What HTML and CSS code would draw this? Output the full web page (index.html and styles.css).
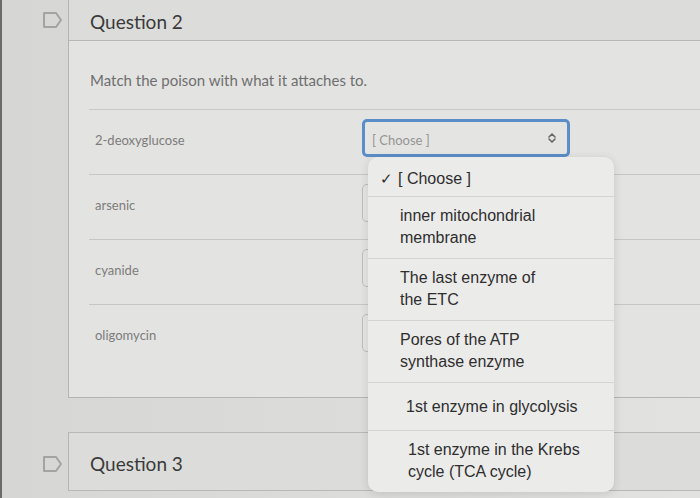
FILE: index.html
```html
<!DOCTYPE html>
<html>
<head>
<meta charset="utf-8">
<link rel="stylesheet" href="styles.css">
</head>
<body>
<div class="page">
  <section class="question">
    <div class="gutter">
      <svg class="flag" width="22" height="18" viewBox="0 0 22 18"><path d="M2 2 H14 L19 9 L14 16 H2 Z" fill="none" stroke="#a3a3a1" stroke-width="2" stroke-linejoin="round"/></svg>
    </div>
    <div class="panel">
      <div class="qhead">Question 2</div>
      <div class="qbody">
        <p class="prompt">Match the poison with what it attaches to.</p>
        <div class="answers">
          <div class="row">
            <span class="label">2-deoxyglucose</span>
            <div class="select active">
              <span>[ Choose ]</span>
              <svg width="10" height="12" viewBox="0 0 10 12"><path d="M2 5 L5 2 L8 5 M2 7 L5 10 L8 7" fill="none" stroke="#666" stroke-width="1.6" stroke-linecap="round" stroke-linejoin="round"/></svg>
            </div>
          </div>
          <div class="row">
            <span class="label">arsenic</span>
            <div class="select"></div>
          </div>
          <div class="row">
            <span class="label">cyanide</span>
            <div class="select"></div>
          </div>
          <div class="row last">
            <span class="label">oligomycin</span>
            <div class="select"></div>
          </div>
        </div>
      </div>
    </div>
  </section>

  <section class="question q3">
    <div class="gutter">
      <svg class="flag" width="22" height="18" viewBox="0 0 22 18"><path d="M2 2 H14 L19 9 L14 16 H2 Z" fill="none" stroke="#a3a3a1" stroke-width="2" stroke-linejoin="round"/></svg>
    </div>
    <div class="panel">
      <div class="qhead tall">Question 3</div>
    </div>
  </section>

  <ul class="menu">
    <li class="opt first"><span class="check">✓</span>[ Choose ]</li>
    <li class="opt">inner mitochondrial<br>membrane</li>
    <li class="opt">The last enzyme of<br>the ETC</li>
    <li class="opt">Pores of the ATP<br>synthase enzyme</li>
    <li class="opt single">1st enzyme in glycolysis</li>
    <li class="opt">1st enzyme in the Krebs<br>cycle (TCA cycle)</li>
  </ul>
</div>
</body>
</html>
```

FILE: styles.css
```css
html, body {
  margin: 0;
  padding: 0;
}
body {
  background: #dadad8;
  font-family: Lato, "Open Sans", sans-serif;
  width: 700px;
  height: 498px;
  overflow: hidden;
}
.page {
  position: relative;
  width: 700px;
  height: 498px;
  border-left: 2px solid #6b6b6b;
  box-sizing: border-box;
  background: linear-gradient(90deg, #d6d6d4 0%, #dddddb 60%, #e2e2e0 100%);
}
.question {
  display: flex;
}
.gutter {
  width: 66px;
  flex: none;
  display: flex;
  justify-content: flex-end;
  padding-right: 4px;
  box-sizing: border-box;
}
.flag {
  margin-top: 11px;
}
.panel {
  flex: 1;
  border-left: 1px solid #b4b4b2;
  background: #e3e3e1;
}
.qhead {
  height: 41px;
  box-sizing: border-box;
  border-bottom: 1px solid #b8b8b6;
  background: #dcdcda;
  padding-left: 21px;
  font-size: 19px;
  line-height: 44px;
  color: #3a3a3a;
}
.qbody {
  padding: 30px 0 28px 20px;
  border-bottom: 1px solid #b4b4b2;
}
.prompt {
  margin: 0 0 20px 1px;
  font-size: 15px;
  line-height: 18px;
  color: #6f6f6f;
}
.answers {
  border-top: 1px solid #c8c8c6;
}
.row {
  height: 64px;
  border-bottom: 1px solid #c6c6c4;
  display: flex;
  align-items: flex-start;
  position: relative;
}
.row.last {
  border-bottom: none;
}
.label {
  width: 267px;
  padding: 22px 0 0 6px;
  font-size: 13px;
  line-height: 16px;
  color: #7c7c7c;
}
.select {
  margin-top: 9px;
  width: 208px;
  height: 38px;
  box-sizing: border-box;
  border: 1px solid #bdbdbb;
  border-radius: 5px;
  background: #e6e6e4;
  display: flex;
  align-items: center;
  justify-content: space-between;
  padding: 0 10px 0 7px;
}
.select.active {
  border: 3px solid #5b8dc8;
  background: #e4e4e2;
}
.select span {
  font-size: 13px;
  color: #959595;
  margin-top: 3px;
}
.q3 {
  margin-top: 34px;
}
.q3 .gutter .flag {
  margin-top: 23px;
}
.qhead.tall {
  height: 59px;
  line-height: 62px;
  border-top: 1px solid #b8b8b6;
  padding-left: 21px;
}
.menu {
  position: absolute;
  left: 366px;
  top: 157px;
  width: 246px;
  margin: 0;
  padding: 0;
  list-style: none;
  background: #ebebea;
  border-radius: 10px;
  box-shadow: 0 2px 10px rgba(0,0,0,0.12);
  font-family: "Liberation Sans", Arial, sans-serif;
  font-size: 16px;
  line-height: 22px;
  color: #2e2e2e;
  overflow: hidden;
}
.opt {
  padding: 8px 10px 9px 32px;
  border-top: 1px solid #d4d4d2;
  min-height: 44px;
}
.opt.first {
  border-top: none;
  min-height: 0;
  padding: 11px 10px 6px 12px;
}
.opt.single {
  min-height: 0;
  padding: 13px 10px 12px 38px;
}
.opt:last-child {
  padding-left: 40px;
}
.check {
  display: inline-block;
  width: 18px;
  font-size: 15px;
}
```
